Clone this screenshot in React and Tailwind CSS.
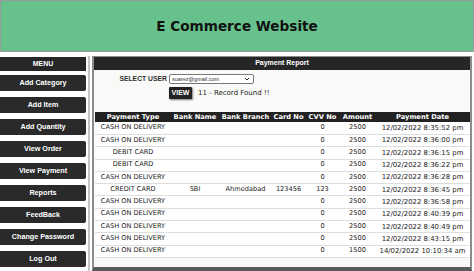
import React from 'react';

const menuItems = ['Add Category', 'Add Item', 'Add Quantity', 'View Order', 'View Payment', 'Reports', 'FeedBack', 'Change Password', 'Log Out'];

const columns = [
  { label: 'Payment Type', w: 'w-[76px]' },
  { label: 'Bank Name', w: 'w-[48px]' },
  { label: 'Bank Branch', w: 'w-[53px]' },
  { label: 'Card No', w: 'w-[33px]' },
  { label: 'CVV No', w: 'w-[35px]' },
  { label: 'Amount', w: 'w-[35px]' },
  { label: 'Payment Date', w: 'w-[95px]' },
];

const COD = 'CASH ON DELIVERY';
const payments = [
  [COD, '', '', '', '0', '2500', '12/02/2022 8:35:52 pm'],
  [COD, '', '', '', '0', '2500', '12/02/2022 8:36:00 pm'],
  ['DEBIT CARD', '', '', '', '0', '2500', '12/02/2022 8:36:15 pm'],
  ['DEBIT CARD', '', '', '', '0', '2500', '12/02/2022 8:36:22 pm'],
  [COD, '', '', '', '0', '2500', '12/02/2022 8:36:28 pm'],
  ['CREDIT CARD', 'SBI', 'Ahmedabad', '123456', '123', '2500', '12/02/2022 8:36:45 pm'],
  [COD, '', '', '', '0', '2500', '12/02/2022 8:36:58 pm'],
  [COD, '', '', '', '0', '2500', '12/02/2022 8:40:39 pm'],
  [COD, '', '', '', '0', '2500', '12/02/2022 8:40:49 pm'],
  [COD, '', '', '', '0', '2500', '12/02/2022 8:43:15 pm'],
  [COD, '', '', '', '0', '1500', '14/02/2022 10:10:34 am'],
];

export default function App() {
  return (
    <div className="w-[474px] h-[271px] overflow-hidden bg-white font-['DejaVu_Sans',sans-serif] text-[#222]">
      {/* Header */}
      <div className="h-[52px] bg-[#66c18c] border border-[#9a9a9a] flex items-center justify-center">
        <h1 className="text-[13.6px] font-bold text-[#111] mt-[1px]">E Commerce Website</h1>
      </div>

      <div className="flex mt-[4px] h-[215px]">
        {/* Sidebar */}
        <div className="w-[90px] border-r-2 border-[#c4c4c4] pt-[1px]">
          <div className="w-[86px] h-[14px] bg-[#262626] text-white text-[7px] font-bold font-['Liberation_Sans',sans-serif] flex items-center justify-center">
            MENU
          </div>
          <div className="flex flex-col gap-[6px] mt-[4px]">
            {menuItems.map(item => (
              <button
                key={item}
                className="w-[86px] h-[16px] bg-[#2a2a2a] rounded-r-[2px] text-white text-[7.2px] font-bold font-['Liberation_Sans',sans-serif] flex items-center justify-center"
              >
                {item}
              </button>
            ))}
          </div>
        </div>

        {/* Main panel */}
        <div className="flex-1 ml-[2px] mr-[2px] border-x-2 border-t border-[#8c8c8c] border-b-[4px] border-b-[#5a5a5a] bg-[#f9f9f7] flex flex-col">
          <div className="h-[13px] bg-[#262626] text-white text-[7px] font-bold font-['Liberation_Sans',sans-serif] flex items-center justify-center">
            Payment Report
          </div>

          <div className="grid grid-cols-[73px_1fr] gap-x-[2px] items-center mt-[4px]">
            <span className="text-right text-[6.8px] font-bold font-['Liberation_Sans',sans-serif] text-[#333]">SELECT USER</span>
            <div className="w-[85px] h-[10px] bg-white border border-[#777] rounded-[2px] flex items-center justify-between px-[2px]">
              <span className="text-[5.5px] text-[#333] font-['Liberation_Sans',sans-serif]">suarez@gmail.com</span>
              <svg width="6" height="4" viewBox="0 0 6 4" className="mr-[1px]">
                <path d="M1 1 L3 3 L5 1" fill="none" stroke="#222" strokeWidth="1" />
              </svg>
            </div>
            <span />
            <div className="flex items-center mt-[3px]">
              <button className="w-[23px] h-[12px] bg-[#222] text-white text-[7px] font-bold font-['Liberation_Sans',sans-serif] rounded-[1px] shadow-[1px_1px_2px_rgba(0,0,0,0.5)] flex items-center justify-center">
                VIEW
              </button>
              <span className="ml-[6px] text-[7px] text-[#222]">11 - Record Found !!</span>
            </div>
          </div>

          <div className="flex-1 mt-[13px] pl-[1px]">
            <table className="table-fixed border-collapse w-[375px] bg-white">
              <colgroup>
                {columns.map(c => <col key={c.label} className={c.w} />)}
              </colgroup>
              <thead>
                <tr className="bg-[#222] h-[10px]">
                  {columns.map(c => (
                    <th key={c.label} className="text-white text-[6.7px] font-bold text-center whitespace-nowrap p-0 leading-[10px]">
                      {c.label}
                    </th>
                  ))}
                </tr>
              </thead>
              <tbody>
                {payments.map((row, i) => (
                  <tr key={i} className="h-[12.3px] border-b border-[#dedede]">
                    {row.map((cell, j) => (
                      <td key={j} className={`${j === 6 ? 'text-[6.9px]' : 'text-[6.6px]'} text-center whitespace-nowrap p-0 text-[#222]`}>
                        {cell}
                      </td>
                    ))}
                  </tr>
                ))}
              </tbody>
            </table>
          </div>
        </div>
      </div>
    </div>
  );
}
